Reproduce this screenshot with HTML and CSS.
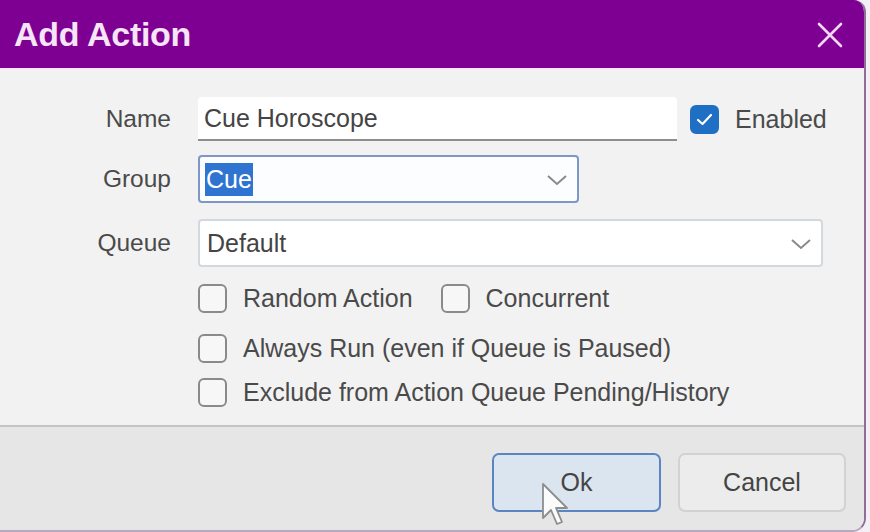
FILE: index.html
```html
<!DOCTYPE html>
<html lang="en">
<head>
    <meta charset="UTF-8">
    <meta name="viewport" content="width=device-width, initial-scale=1.0">
    <title>Add Action</title>
    <link rel="stylesheet" href="styles.css">
</head>
<body>
    <div class="dialog">
        <header class="titlebar">
            <h1>Add Action</h1>
            <span class="close">
                <svg width="26" height="26" viewBox="0 0 26 26">
                    <path d="M2 2 L24 24 M24 2 L2 24" stroke="#f3d6f5" stroke-width="2.6" stroke-linecap="round"/>
                </svg>
            </span>
        </header>

        <div class="content">
            <div class="row row-name">
                <span class="lbl">Name</span>
                <div class="textbox name-box">Cue Horoscope</div>
                <span class="check on">
                    <svg width="17" height="13" viewBox="0 0 17 13">
                        <path d="M2 7 L6.5 11 L15 2" fill="none" stroke="#fff" stroke-width="2.2" stroke-linecap="round" stroke-linejoin="round"/>
                    </svg>
                </span>
                <span class="check-text">Enabled</span>
            </div>

            <div class="row row-group">
                <span class="lbl">Group</span>
                <div class="combo group-box focused">
                    <span class="selected">Cue</span>
                    <svg class="chev" width="22" height="12" viewBox="0 0 22 12">
                        <path d="M2 2 L11 10 L20 2" fill="none" stroke="#8a8a8a" stroke-width="2"/>
                    </svg>
                </div>
            </div>

            <div class="row row-queue">
                <span class="lbl">Queue</span>
                <div class="combo queue-box">
                    <span class="value">Default</span>
                    <svg class="chev" width="22" height="12" viewBox="0 0 22 12">
                        <path d="M2 2 L11 10 L20 2" fill="none" stroke="#8a8a8a" stroke-width="2"/>
                    </svg>
                </div>
            </div>

            <div class="opts">
                <div class="opt-row first">
                    <span class="check"></span>
                    <span class="check-text">Random Action</span>
                    <span class="check second"></span>
                    <span class="check-text">Concurrent</span>
                </div>
                <div class="opt-row middle">
                    <span class="check"></span>
                    <span class="check-text">Always Run (even if Queue is Paused)</span>
                </div>
                <div class="opt-row last">
                    <span class="check"></span>
                    <span class="check-text">Exclude from Action Queue Pending/History</span>
                </div>
            </div>
        </div>

        <footer class="footer">
            <button class="btn primary">Ok</button>
            <button class="btn">Cancel</button>
        </footer>

        <!-- mouse pointer resting on the Ok button -->
        <svg class="pointer" width="30" height="46" viewBox="0 0 30 46">
            <path d="M2 2 L2 36 L10 28 L16 42 L21 40 L15 26 L26 26 Z" fill="#fbfbfb" stroke="#8d8d8d" stroke-width="1.8" stroke-linejoin="round"/>
        </svg>
    </div>
</body>
</html>
```

FILE: styles.css
```css
html, body {
    margin: 0;
    padding: 0;
    background: #f4eff5;
}
body {
    font-family: "Liberation Sans", Arial, sans-serif;
    color: #444;
}
.dialog {
    position: relative;
    width: 864px;
    height: 530px;
    border-right: 2px solid #8e6f98;
    border-bottom: 2px solid #b9a6c0;
    border-radius: 0 12px 14px 0;
    overflow: hidden;
    background: #f2f2f2;
}
.titlebar {
    height: 68px;
    background: #7e0092;
    border-bottom: 2px solid #f7e9f8;
    display: flex;
    align-items: center;
    justify-content: space-between;
    padding: 0 20px 0 14px;
}
.titlebar h1 {
    margin: 0;
    font-size: 34px;
    font-weight: 600;
    color: #f6e4f7;
    letter-spacing: -0.3px;
}
.close {
    display: flex;
    margin-right: 1px;
    margin-top: 2px;
}
.content {
    height: 328px;
    padding-top: 27px;
    border-bottom: 2px solid #c4c4c4;
}
.row {
    display: flex;
    align-items: center;
}
.lbl {
    width: 171px;
    text-align: right;
    font-size: 24.5px;
    color: #4a4a4a;
    margin-right: 27px;
}
.row-name {
    height: 44px;
    margin-bottom: 14px;
}
.row-group {
    height: 48px;
    margin-bottom: 16px;
}
.row-queue {
    height: 48px;
}
.textbox, .combo {
    box-sizing: border-box;
    background: #fff;
    font-size: 25px;
    color: #444;
    display: flex;
    align-items: center;
}
.name-box {
    width: 479px;
    height: 44px;
    padding-left: 6px;
    border-bottom: 2px solid #8e8e8e;
    border-radius: 4px 4px 0 0;
}
.combo {
    height: 48px;
    border: 2px solid #d3d8df;
    border-radius: 4px;
    justify-content: space-between;
    padding: 0 9px 0 5px;
}
.group-box {
    width: 381px;
    border-color: #7d97c9;
    background: #fbfdff;
}
.queue-box {
    width: 625px;
}
.selected {
    background: #2f74d0;
    color: #fff;
    padding: 2px 1px;
}
.value {
    padding-left: 2px;
}
.chev {
    margin-top: 2px;
}
.check {
    box-sizing: border-box;
    width: 29px;
    height: 29px;
    border: 2px solid #8a8a8a;
    border-radius: 6px;
    background: #f7f7f7;
    display: flex;
    align-items: center;
    justify-content: center;
    flex-shrink: 0;
}
.check.on {
    background: #1f6fc5;
    border-color: #1f6fc5;
    margin-left: 13px;
}
.check-text {
    font-size: 25px;
    color: #4a4a4a;
    margin-left: 16px;
}
.check.second {
    margin-left: 28px;
}
.opts {
    padding-left: 198px;
}
.opt-row {
    display: flex;
    align-items: center;
    height: 30px;
}
.opt-row.first {
    margin-top: 16px;
}
.opt-row.middle {
    margin-top: 20px;
}
.opt-row.last {
    margin-top: 14px;
}
.footer {
    height: 103px;
    background: #e6e6e6;
    display: flex;
    justify-content: flex-end;
    align-items: flex-start;
    gap: 17px;
    padding: 26px 18px 0 0;
    box-sizing: border-box;
}
.btn {
    width: 168px;
    height: 59px;
    font-family: "Liberation Sans", Arial, sans-serif;
    font-size: 25px;
    color: #444;
    background: #ececec;
    border: 2px solid #d2d2d2;
    border-radius: 7px;
}
.btn.primary {
    width: 169px;
    background: #dbe5ef;
    border-color: #5b85c2;
}
.pointer {
    position: absolute;
    left: 541px;
    top: 482px;
}
```
